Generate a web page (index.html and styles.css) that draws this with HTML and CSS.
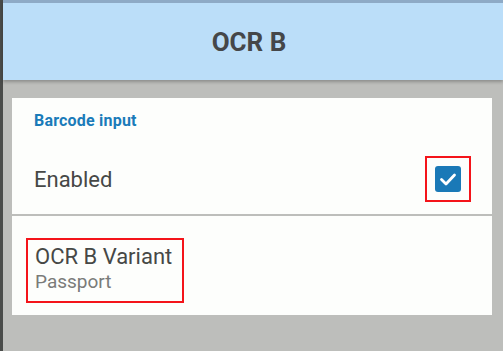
FILE: index.html
```html
<!DOCTYPE html>
<html>
<head>
<meta charset="utf-8">
<link rel="stylesheet" href="styles.css">
</head>
<body>
<div class="screen">
  <header class="appbar"><h1 class="title">OCR B</h1></header>
  <main class="content">
    <section class="card first">
      <div class="section-label">Barcode input</div>
      <div class="row">
        <span class="row-title">Enabled</span>
        <span class="highlight check-wrap">
          <span class="checkbox">
            <svg viewBox="0 0 26 26" width="26" height="26"><path d="M6.5 13.5 L11 18 L19.5 9" fill="none" stroke="#fff" stroke-width="2.8" stroke-linecap="round" stroke-linejoin="round"/></svg>
          </span>
        </span>
      </div>
    </section>
    <section class="card second">
      <div class="highlight pref">
        <div class="row-title">OCR B Variant</div>
        <div class="summary">Passport</div>
      </div>
    </section>
  </main>
</div>
</body>
</html>
```
FILE: styles.css
```css
html, body { margin: 0; padding: 0; }
body {
  width: 503px; height: 351px; overflow: hidden;
  background: #bdbebb;
  font-family: Roboto, "Noto Sans", sans-serif;
}
.screen {
  height: 351px;
  border-left: 3px solid #4a4c4a;
  box-sizing: border-box;
  display: flex; flex-direction: column;
}
.appbar {
  height: 80px;
  box-sizing: border-box;
  border-top: 3px solid #8eaac6;
  background: #bbdef9;
  box-shadow: 0 2px 3px rgba(0,0,0,0.25);
  display: flex; align-items: center; justify-content: center;
}
.title {
  margin: 0 0 0 -8px;
  font-size: 26px; font-weight: 700; color: #454749;
}
.content {
  padding: 18px 11px 0 9px;
  display: flex; flex-direction: column; gap: 2px;
}
.card { background: #fdfefc; }
.card.first { height: 116px; box-sizing: border-box; padding: 13px 21px 0 22px; }
.card.second { height: 99px; box-sizing: border-box; padding: 22px 0 0 14px; }
.section-label {
  font-size: 16px; font-weight: 700; color: #1a7bb9; letter-spacing: 0.2px;
}
.row {
  display: flex; align-items: center; justify-content: space-between;
  margin-top: 26px;
}
.row-title { font-size: 22px; color: #464846; }
.pref .row-title { line-height: 24px; }
.highlight { border: 2px solid #f4141a; box-sizing: border-box; }
.check-wrap {
  width: 46px; height: 46px;
  display: flex; align-items: center; justify-content: center;
}
.checkbox {
  width: 26px; height: 26px; border-radius: 3px; background: #1a79b7;
  display: block;
}
.checkbox svg { display: block; }
.pref {
  width: 158px; height: 65px;
  padding: 5px 0 0 7px;
}
.summary { font-size: 19px; color: #7a7b79; margin-top: 1px; }
```
